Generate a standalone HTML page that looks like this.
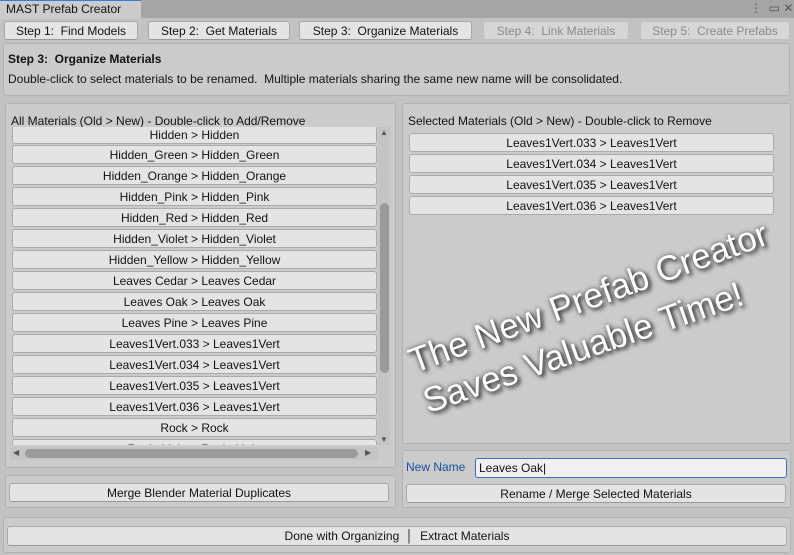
<!DOCTYPE html>
<html style="overflow:hidden"><head><style>
*{box-sizing:border-box;margin:0;padding:0}
body{width:794px;height:555px;background:#c2c2c2;font-family:"Liberation Sans",sans-serif;font-size:12px;color:#111;position:relative;overflow:hidden}
.a{position:absolute}
.btn{position:absolute;background:#e4e4e4;border:1px solid #a9a9a9;border-bottom-color:#999;border-radius:3px;text-align:center;line-height:18px;font-size:12px;white-space:nowrap;overflow:hidden}
.dis{color:#8a8a8a;background:#d6d6d6;border-color:#c0c0c0}
.panel{position:absolute;background:#cbcbcb;border:1px solid #b2b2b2;border-radius:3px}
.row{position:absolute;left:12px;width:365px;height:19px;background:#e4e4e4;border:1px solid #aaa;border-radius:3px;text-align:center;line-height:18px;font-size:12px}
.rrow{position:absolute;left:409px;width:365px;height:19px;background:#e4e4e4;border:1px solid #aaa;border-radius:3px;text-align:center;line-height:18px}
.ov{position:absolute;white-space:nowrap;font-family:"Liberation Sans",sans-serif;font-size:35px;line-height:35px;color:#fff;text-shadow:2px 3px 4px #333,0 0 5px #555;transform-origin:0 100%}
</style></head><body>
<div class="a" style="left:0;top:0;width:794px;height:18px;background:#a5a5a5"></div>
<div class="a" style="left:0;top:0;width:141px;height:19px;background:#cbcbcb;border-top:1px solid #3a7bd5;padding-left:6px;line-height:17px;font-size:12px">MAST Prefab Creator</div>
<div class="a" style="left:750px;top:1px;font-size:12px;color:#555;line-height:14px">⋮&nbsp; ▭ ✕</div>
<div class="btn" style="left:4px;top:21px;width:134px;height:19px">Step 1:&nbsp; Find Models</div>
<div class="btn" style="left:148px;top:21px;width:142px;height:19px">Step 2:&nbsp; Get Materials</div>
<div class="btn" style="left:299px;top:21px;width:173px;height:19px">Step 3:&nbsp; Organize Materials</div>
<div class="btn dis" style="left:483px;top:21px;width:146px;height:19px">Step 4:&nbsp; Link Materials</div>
<div class="btn dis" style="left:640px;top:21px;width:150px;height:19px">Step 5:&nbsp; Create Prefabs</div>
<div class="panel" style="left:3px;top:43px;width:787px;height:53px"></div>
<div class="a" style="left:8px;top:52px;font-weight:bold">Step 3:&nbsp; Organize Materials</div>
<div class="a" style="left:8px;top:72px">Double-click to select materials to be renamed.&nbsp; Multiple materials sharing the same new name will be consolidated.</div>
<div class="panel" style="left:5px;top:103px;width:391px;height:365px"></div>
<div class="a" style="left:11px;top:114px">All Materials (Old &gt; New) - Double-click to Add/Remove</div>
<div class="a" style="left:10px;top:127px;width:369px;height:318px;overflow:hidden">
<div style="position:absolute;left:-10px;top:-127px;width:400px;height:600px">
<div class="row" style="top:125px">Hidden &gt; Hidden</div>
<div class="row" style="top:145px">Hidden_Green &gt; Hidden_Green</div>
<div class="row" style="top:166px">Hidden_Orange &gt; Hidden_Orange</div>
<div class="row" style="top:187px">Hidden_Pink &gt; Hidden_Pink</div>
<div class="row" style="top:208px">Hidden_Red &gt; Hidden_Red</div>
<div class="row" style="top:229px">Hidden_Violet &gt; Hidden_Violet</div>
<div class="row" style="top:250px">Hidden_Yellow &gt; Hidden_Yellow</div>
<div class="row" style="top:271px">Leaves Cedar &gt; Leaves Cedar</div>
<div class="row" style="top:292px">Leaves Oak &gt; Leaves Oak</div>
<div class="row" style="top:313px">Leaves Pine &gt; Leaves Pine</div>
<div class="row" style="top:334px">Leaves1Vert.033 &gt; Leaves1Vert</div>
<div class="row" style="top:355px">Leaves1Vert.034 &gt; Leaves1Vert</div>
<div class="row" style="top:376px">Leaves1Vert.035 &gt; Leaves1Vert</div>
<div class="row" style="top:397px">Leaves1Vert.036 &gt; Leaves1Vert</div>
<div class="row" style="top:418px">Rock &gt; Rock</div>
<div class="row" style="top:439px">Rock_Light &gt; Rock_Light</div>
</div></div>
<div class="a" style="left:378px;top:127px;width:12px;height:318px;background:#c4c4c4"></div>
<div class="a" style="left:380px;top:203px;width:9px;height:170px;background:#9a9a9a;border-radius:5px"></div>
<div class="a" style="left:380px;top:128px;font-size:8px;color:#555">▲</div>
<div class="a" style="left:380px;top:435px;font-size:8px;color:#555">▼</div>
<div class="a" style="left:10px;top:447px;width:368px;height:13px;background:#c4c4c4"></div>
<div class="a" style="left:25px;top:449px;width:333px;height:9px;background:#9a9a9a;border-radius:5px"></div>
<div class="a" style="left:13px;top:448px;font-size:8px;color:#555">◀</div>
<div class="a" style="left:365px;top:448px;font-size:8px;color:#555">▶</div>
<div class="panel" style="left:402px;top:103px;width:389px;height:341px"></div>
<div class="a" style="left:408px;top:114px">Selected Materials (Old &gt; New) - Double-click to Remove</div>
<div class="rrow" style="top:133px">Leaves1Vert.033 &gt; Leaves1Vert</div>
<div class="rrow" style="top:154px">Leaves1Vert.034 &gt; Leaves1Vert</div>
<div class="rrow" style="top:175px">Leaves1Vert.035 &gt; Leaves1Vert</div>
<div class="rrow" style="top:196px">Leaves1Vert.036 &gt; Leaves1Vert</div>
<div class="ov" style="left:416px;top:344px;transform:rotate(-20deg)">The New Prefab Creator</div>
<div class="ov" style="left:430px;top:384px;transform:rotate(-19deg)">Saves Valuable Time!</div>
<div class="panel" style="left:402px;top:450px;width:389px;height:58px"></div>
<div class="a" style="left:406px;top:460px;color:#1d4f9c">New Name</div>
<div class="a" style="left:475px;top:458px;width:312px;height:20px;background:#f0f0f0;border:1px solid #3a6fbf;border-radius:3px;padding-left:3px;line-height:18px">Leaves Oak|</div>
<div class="btn" style="left:406px;top:484px;width:380px;height:19px">Rename / Merge Selected Materials</div>
<div class="panel" style="left:5px;top:475px;width:391px;height:33px"></div>
<div class="btn" style="left:9px;top:483px;width:380px;height:19px">Merge Blender Material Duplicates</div>
<div class="panel" style="left:3px;top:517px;width:788px;height:36px"></div>
<div class="btn" style="left:7px;top:526px;width:780px;height:20px;line-height:19px">Done with Organizing&nbsp; │&nbsp; Extract Materials</div>
</body></html>
